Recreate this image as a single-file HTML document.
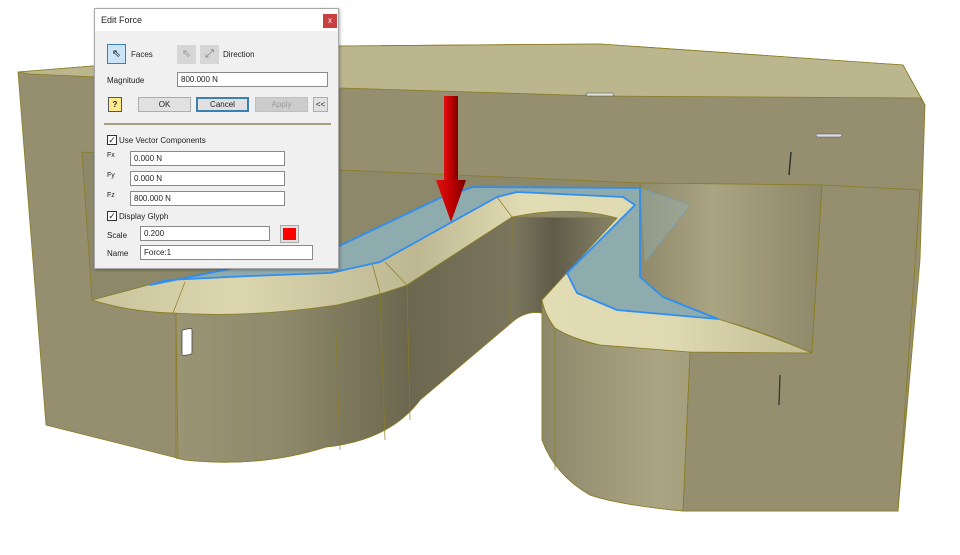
<!DOCTYPE html>
<html><head><meta charset="utf-8"><style>
body{margin:0;width:960px;height:555px;overflow:hidden;background:#fff;font-family:"Liberation Sans",sans-serif;position:relative}
svg{position:absolute;left:0;top:0}
.dlg{position:absolute;left:94px;top:8px;width:243px;height:259px;background:#f0f0f0;border:1px solid #a8a8a8;box-shadow:1px 1px 3px rgba(0,0,0,.3);font-size:8px;color:#222}
.a{position:absolute}
.title{left:0;top:0;width:243px;height:22px;background:#fff}
.inp{position:absolute;background:#fff;border:1px solid #8a8a8a;height:13px;line-height:13px;padding-left:3px;box-sizing:border-box;font-size:8px}
.btn{position:absolute;height:15px;line-height:13px;text-align:center;background:#e1e1e1;border:1px solid #adadad;box-sizing:border-box;font-size:8px}
.cb{position:absolute;width:10px;height:10px;border:1px solid #333;background:#fff;box-sizing:border-box;font-size:9px;line-height:8px;text-align:center}
</style></head><body>
<svg width="960" height="555" viewBox="0 0 960 555">
<defs>
<linearGradient id="lw" x1="0" x2="1" y1="0" y2="0"><stop offset="0" stop-color="#a29c7b"/><stop offset=".45" stop-color="#8f8a6b"/><stop offset=".75" stop-color="#6c684f"/><stop offset="1" stop-color="#7a755c"/></linearGradient>
<linearGradient id="rw" x1="0" x2="1"><stop offset="0" stop-color="#8d886a"/><stop offset=".3" stop-color="#aaa482"/><stop offset=".6" stop-color="#9b9576"/><stop offset="1" stop-color="#928c6d"/></linearGradient>
<linearGradient id="band" x1="0" x2="1"><stop offset="0" stop-color="#c9c39c"/><stop offset=".2" stop-color="#ddd7b0"/><stop offset=".45" stop-color="#bdb792"/><stop offset=".6" stop-color="#e2dcb4"/><stop offset=".8" stop-color="#e0dab2"/><stop offset="1" stop-color="#c2bc96"/></linearGradient>
<linearGradient id="ar" x1="0" x2="1"><stop offset="0" stop-color="#e01010"/><stop offset=".5" stop-color="#c00000"/><stop offset="1" stop-color="#7a0000"/></linearGradient>
<linearGradient id="rp" x1="0" x2="1"><stop offset="0" stop-color="#8f8a6b"/><stop offset=".4" stop-color="#aaa482"/><stop offset="1" stop-color="#8d8869"/></linearGradient>
<linearGradient id="hole" x1="0" x2="1"><stop offset="0" stop-color="#7c7860"/><stop offset=".4" stop-color="#5f5b48"/><stop offset="1" stop-color="#8a8568"/></linearGradient>
</defs>
<g stroke="#8a7c22" stroke-width="0.8">
<path d="M18,72 L340,46 L600,44 L903,65 L925,105 L920,260 L898,511 L683,511 Q620,505 590,495 Q555,475 542,440 L542,313 Q525,310 511,323 L420,400 Q390,440 326,447 Q260,468 185,460 L46,425 Z" fill="#958f70"/>
<path d="M18,72 L340,46 L600,44 L903,65 L925,105 L920,98 L600,96 L340,88 L30,74 Z" fill="#bcb68e"/>
<path d="M82,152 L340,170 L640,183 L822,185 L812,353 L690,352 L600,345 L555,328 L542,300 L512,217 L407,285 L337,305 L173,313 L92,300 Z" fill="#8d8869"/>
<path d="M640,183 L822,185 L812,353 Q760,330 720,320 L663,297 L640,277 Z" fill="url(#rp)"/>
<path d="M512,217 L617,218 L542,300 L542,313 Q525,310 511,323 Z" fill="url(#hole)"/>
<path d="M92,300 Q130,312 173,313 L337,305 L407,285 L512,217 L511,323 L420,400 Q390,440 326,447 Q260,468 185,460 L176,458 L176,313 Z" fill="url(#lw)"/>
<path d="M542,300 Q548,322 555,328 Q580,342 600,345 L690,352 L812,353 L822,185 L920,190 L898,511 L683,511 Q620,505 590,495 Q555,475 542,440 Z" fill="url(#rw)"/>
<path d="M822,185 L920,190 L898,511 L683,511 L690,352 L812,353 Z" fill="#958f70"/>
<path d="M92,300 L167,280 L250,276 L330,273 L380,262 L497,197 L517,192 L623,197 L635,205 L567,273 L577,293 L617,310 L718,319 Q770,335 812,353 L690,352 L600,345 Q570,338 555,328 Q545,315 542,300 L617,218 Q570,205 512,217 L407,285 Q380,295 337,305 Q250,318 173,313 Q130,312 92,300 Z" fill="url(#band)"/>
</g>
<g stroke="#8a7c22" stroke-width="0.7" fill="none">
<path d="M176,313 L178,458"/><path d="M335,306 L340,450"/><path d="M380,292 L385,440"/><path d="M407,285 L410,420"/>
<path d="M555,328 L555,470"/><path d="M690,352 L683,511"/><path d="M641,185 L640,277"/>
<path d="M380,292 L372,263"/><path d="M407,285 L385,262"/><path d="M173,313 L185,282"/><path d="M512,217 L497,197"/>
</g>
<path d="M640,188 L690,205 L645,262" fill="rgba(150,185,195,.35)" stroke="#4aa0f0" stroke-width="0.7" stroke-dasharray="2,2"/>
<path d="M150,285 L337,247 L440,198 L473,187 L640,188 L640,277 L663,297 L718,319 L617,310 L577,293 L567,273 L635,205 L623,197 L517,192 L497,197 L380,262 L330,273 L250,276 L167,280 Z" fill="#8eabae" stroke="#2f8ff0" stroke-width="1.8" stroke-linejoin="round"/>
<rect x="444" y="96" width="14" height="86" fill="url(#ar)"/>
<path d="M436,180 L466,180 L451,222 Z" fill="url(#ar)"/>
<rect x="586" y="93" width="28" height="3" rx="1.5" fill="#ddd" stroke="#555" stroke-width=".6"/>
<rect x="816" y="134" width="26" height="3" rx="1.5" fill="#ddd" stroke="#555" stroke-width=".6"/>
<path d="M791,152 L789,175" stroke="#333" stroke-width="1.5"/>
<path d="M780,375 L779,405" stroke="#333" stroke-width="1.3"/>
<rect x="182" y="329" width="10" height="26" rx="2" fill="#fff" stroke="#444" stroke-width=".8" transform="skewY(-10) translate(0,33)"/>
</svg>
<div class="dlg">
<div class="a title"></div>
<div class="a" style="left:6px;top:6px;font-size:9px">Edit Force</div>
<div class="a" style="left:228px;top:5px;width:14px;height:14px;background:#c94040;color:#fff;font-size:8px;text-align:center;line-height:13px">x</div>
<div class="a" style="left:12px;top:35px;width:19px;height:20px;background:#cce4f7;border:1px solid #3c7fb1;box-sizing:border-box;font-size:11px;text-align:center;line-height:18px">⇖</div>
<div class="a" style="left:36px;top:41px">Faces</div>
<div class="a" style="left:82px;top:36px;width:19px;height:19px;background:#d6d6d6;color:#999;text-align:center;line-height:19px;font-size:11px">⇖</div>
<div class="a" style="left:105px;top:36px;width:19px;height:19px;background:#d6d6d6;color:#777;text-align:center;line-height:19px;font-size:11px">⤢</div>
<div class="a" style="left:128px;top:41px">Direction</div>
<div class="a" style="left:12px;top:67px">Magnitude</div>
<div class="inp" style="left:82px;top:63px;width:151px;height:15px;line-height:13px">800.000 N</div>
<div class="a" style="left:13px;top:88px;width:14px;height:15px;background:#ffe98a;border:1px solid #555;box-sizing:border-box;text-align:center;font-weight:bold;line-height:13px">?</div>
<div class="btn" style="left:43px;top:88px;width:53px">OK</div>
<div class="btn" style="left:101px;top:88px;width:53px;border:2px solid #3c7fb1;line-height:11px">Cancel</div>
<div class="btn" style="left:160px;top:88px;width:53px;background:#cccccc;border-color:#bfbfbf;color:#9a9a9a">Apply</div>
<div class="btn" style="left:218px;top:88px;width:15px">&lt;&lt;</div>
<div class="a" style="left:9px;top:114px;width:227px;height:2px;background:#a49e80"></div>
<div class="cb" style="left:12px;top:126px">✓</div>
<div class="a" style="left:24px;top:127px">Use Vector Components</div>
<div class="a" style="left:12px;top:143px;font-size:7px">Fx</div>
<div class="inp" style="left:35px;top:142px;width:155px;height:15px">0.000 N</div>
<div class="a" style="left:12px;top:163px;font-size:7px">Fy</div>
<div class="inp" style="left:35px;top:162px;width:155px;height:15px">0.000 N</div>
<div class="a" style="left:12px;top:183px;font-size:7px">Fz</div>
<div class="inp" style="left:35px;top:182px;width:155px;height:15px">800.000 N</div>
<div class="cb" style="left:12px;top:202px">✓</div>
<div class="a" style="left:24px;top:203px">Display Glyph</div>
<div class="a" style="left:12px;top:222px">Scale</div>
<div class="inp" style="left:45px;top:217px;width:130px;height:15px">0.200</div>
<div class="a" style="left:185px;top:216px;width:19px;height:18px;background:#e0e0e0;border:1px solid #aaa;box-sizing:border-box"><div style="margin:2px;width:13px;height:12px;background:#f00"></div></div>
<div class="a" style="left:12px;top:240px">Name</div>
<div class="inp" style="left:45px;top:236px;width:173px;height:15px">Force:1</div>
</div>
</body></html>
